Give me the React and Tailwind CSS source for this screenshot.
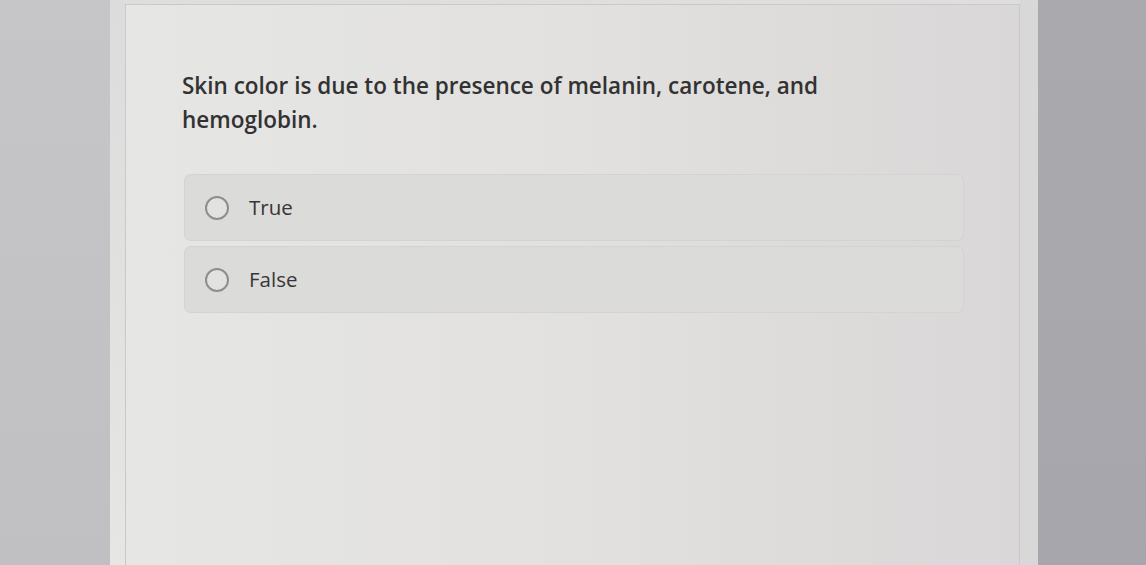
export default function App() {
  const options = ["True", "False"];
  return (
    <div
      className="flex h-[565px] w-[1146px] overflow-hidden bg-[#dedede]"
      style={{ fontFamily: '"Open Sans", "Noto Sans", sans-serif' }}
    >
      {/* left side panel */}
      <div className="h-full w-[110px] shrink-0 bg-gradient-to-b from-[#c6c6c8] to-[#c0c0c2]" />
      {/* gutter */}
      <div className="h-full w-[15px] shrink-0 bg-gradient-to-b from-[#dcdcdc] to-[#e6e6e4]" />

      {/* question card */}
      <div className="mt-[4px] flex h-[600px] w-[895px] shrink-0 flex-col border border-[#c9c9c9] bg-gradient-to-r from-[#e6e6e4] via-[#e2e1df] to-[#d9d7d7] pl-[56px] pt-[64px]">
        <p className="w-[690px] text-[22.5px] font-semibold leading-[34px] text-[#323232]">
          Skin color is due to the presence of melanin, carotene, and hemoglobin.
        </p>

        <div className="mt-[38px] flex flex-col gap-[7px] pl-[3px]">
          {options.map((label) => (
            <label
              key={label}
              className="flex h-[65px] w-[778px] items-center gap-[20px] rounded-[6px] bg-[#dbdbd9] pl-[20px] shadow-[0_0_0_1px_#d3d3d1]"
            >
              <span className="h-[24px] w-[24px] rounded-full border-2 border-[#8e8e8e] bg-[#e2e2e0]" />
              <span className="text-[20.5px] font-medium text-[#363636]">{label}</span>
            </label>
          ))}
        </div>
      </div>

      {/* gutter */}
      <div className="h-full w-[18px] shrink-0 bg-[#d8d8d8]" />
      {/* right side panel */}
      <div className="h-full flex-1 bg-gradient-to-b from-[#aaa9ad] to-[#a6a6ac]" />
    </div>
  );
}
